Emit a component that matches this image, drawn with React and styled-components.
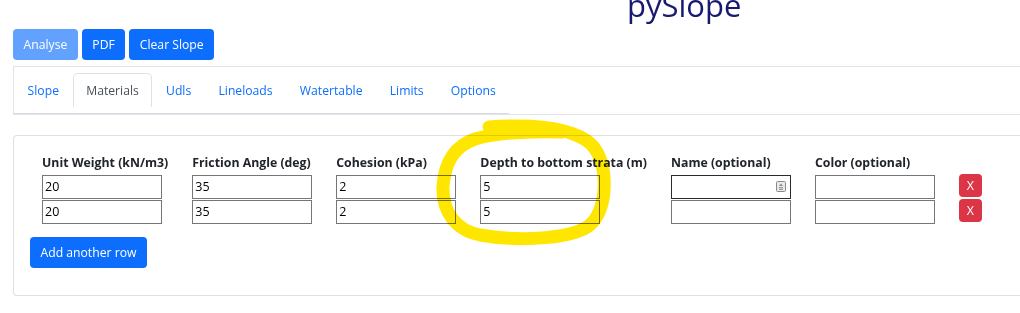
import React from "react";
import styled, { createGlobalStyle } from "styled-components";

const GlobalStyle = createGlobalStyle`
  html, body { margin: 0; padding: 0; background: #fff; }
  body { font-family: "Open Sans", "Noto Sans", sans-serif; color: #212529; overflow: hidden; }
  * { box-sizing: border-box; }
`;

const Page = styled.div`
  position: relative;
  width: 1020px;
  height: 313px;
  padding-left: 13px;
  overflow: hidden;
`;

const Title = styled.h1`
  margin: -11px 0 0 0;
  padding-left: 614px;
  font-size: 31px;
  line-height: 32px;
  font-weight: 500;
  color: #191970;
  height: 29px;
`;

const Toolbar = styled.div`
  display: flex;
  gap: 4px;
  margin-top: 11px;
`;

const Button = styled.button`
  height: 31px;
  padding: 0 10.5px;
  border: none;
  border-radius: 4px;
  font-family: inherit;
  font-size: 12.2px;
  color: #fff;
  background: ${(p) => (p.$disabled ? "#62a1fe" : "#0d6efd")};
  cursor: pointer;
`;

const TabsBox = styled.div`
  margin-top: 6px;
  border: 1px solid #e3e3ea;
  border-right: none;
  padding: 6px 0 0 0;
`;

const Nav = styled.ul`
  display: flex;
  width: fit-content;
  margin: 0;
  padding: 0 0 6px 0;
  list-style: none;
  border-bottom: 1px solid #dadbe2;
`;

const Tab = styled.li`
  height: 34px;
  display: flex;
  align-items: center;
  padding: 0 12.6px 1px;
  font-size: 12.2px;
  color: ${(p) => (p.$active ? "#495057" : "#0d6efd")};
  border: 1px solid ${(p) => (p.$active ? "#dee2e6" : "transparent")};
  border-bottom: none;
  border-radius: 5px 5px 0 0;
  background: #fff;
`;

const Card = styled.div`
  margin-top: 20px;
  height: 161px;
  border: 1px solid #dfdfdf;
  border-right: none;
  border-radius: 4px 0 0 4px;
  padding: 16px 0 0 16px;
`;

const Grid = styled.div`
  display: grid;
  grid-template-columns: repeat(7, auto);
  justify-content: start;
  column-gap: 24px;
  row-gap: 1px;
  padding: 0 12px;
`;

const Label = styled.div`
  height: 21px;
  font-size: 12.3px;
  font-weight: 700;
  line-height: 21px;
  white-space: nowrap;
  color: #212529;
`;

const Field = styled.div`
  position: relative;
  width: 120px;
  height: 24px;
`;

const Input = styled.input`
  width: 120px;
  height: 24px;
  border: 1px solid ${(p) => (p.$focused ? "#2b2b2b" : "#767676")};
  border-radius: 0;
  padding: 0 2px;
  font-family: inherit;
  font-size: 12.5px;
  color: #000;
  background: #fff;
  outline: none;
`;

const AutofillIcon = styled.svg`
  position: absolute;
  right: 5px;
  top: 7px;
`;

const DeleteButton = styled.button`
  width: 23px;
  height: 23px;
  padding: 0;
  border: none;
  border-radius: 4px;
  background: #dc3545;
  color: #fff;
  font-family: inherit;
  font-size: 12.5px;
  line-height: 23px;
  text-align: center;
`;

const AddButton = styled(Button)`
  margin-top: 14px;
`;

const Annotation = styled.svg`
  position: absolute;
  left: 0;
  top: 0;
  pointer-events: none;
  mix-blend-mode: multiply;
`;

const rows = [
  { w: "20", a: "35", c: "2", d: "5" },
  { w: "20", a: "35", c: "2", d: "5" },
];

export default function App() {
  return (
    <>
      <GlobalStyle />
      <Page>
        <Title>pySlope</Title>
        <Toolbar>
          <Button $disabled>Analyse</Button>
          <Button>PDF</Button>
          <Button>Clear Slope</Button>
        </Toolbar>
        <TabsBox>
          <Nav>
            {["Slope", "Materials", "Udls", "Lineloads", "Watertable", "Limits", "Options"].map((t) => (
              <Tab key={t} $active={t === "Materials"}>{t}</Tab>
            ))}
          </Nav>
        </TabsBox>
        <Card>
          <Grid>
            <Label>Unit Weight (kN/m3)</Label>
            <Label>Friction Angle (deg)</Label>
            <Label>Cohesion (kPa)</Label>
            <Label>Depth to bottom strata (m)</Label>
            <Label>Name (optional)</Label>
            <Label>Color (optional)</Label>
            <div />
            {rows.map((r, i) => (
              <React.Fragment key={i}>
                <Field><Input defaultValue={r.w} /></Field>
                <Field><Input defaultValue={r.a} /></Field>
                <Field><Input defaultValue={r.c} /></Field>
                <Field><Input defaultValue={r.d} /></Field>
                <Field>
                  <Input $focused={i === 0} defaultValue="" />
                  {i === 0 && (
                    <AutofillIcon width="10" height="11" viewBox="0 0 10 11">
                      <rect x="0.5" y="0.5" width="9" height="10" rx="1" fill="#e9e9e9" stroke="#8a8a8a" />
                      <path d="M5 2.5 L7 5 H3 Z" fill="#8a8a8a" />
                      <rect x="3" y="6.2" width="4" height="1" fill="#8a8a8a" />
                      <rect x="3" y="7.8" width="4" height="1" fill="#8a8a8a" />
                    </AutofillIcon>
                  )}
                </Field>
                <Field><Input defaultValue="" /></Field>
                <DeleteButton>X</DeleteButton>
              </React.Fragment>
            ))}
          </Grid>
          <AddButton>Add another row</AddButton>
        </Card>
        <Annotation width="1020" height="313" viewBox="0 0 1020 313">
          <path
            d="M489 127 C530 124 572 127 591 144 C609 163 608 205 592 223 C577 239 520 242 480 235 C455 230 442 211 443 186 C445 161 455 146 475 139 C500 132 530 131 562 132"
            fill="none"
            stroke="#ffe600"
            strokeWidth="13"
            strokeLinecap="round"
            strokeLinejoin="round"
          />
        </Annotation>
      </Page>
    </>
  );
}
